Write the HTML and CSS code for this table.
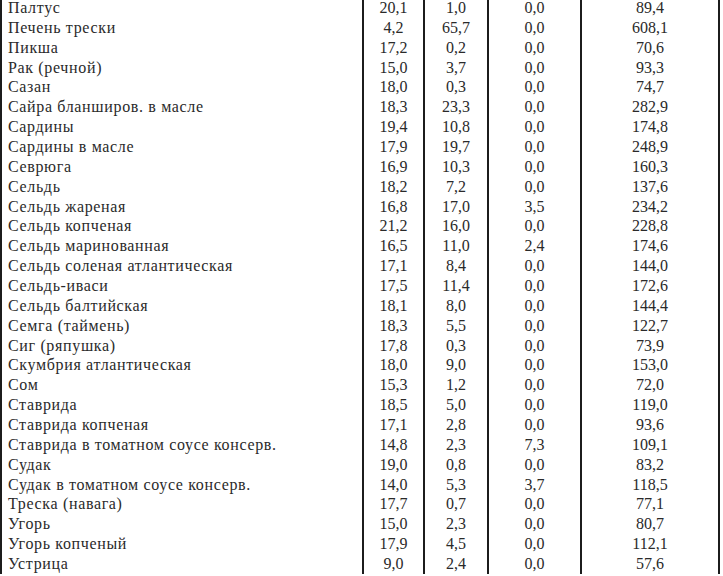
FILE: index.html
```html
<!DOCTYPE html>
<html lang="ru">
<head>
<meta charset="utf-8">
<title>Рыба и морепродукты</title>
<link rel="stylesheet" href="styles.css">
</head>
<body>
<table class="tbl">
<tbody>
<tr><td class="name">Палтус</td><td class="c2">20,1</td><td class="c3">1,0</td><td class="c4">0,0</td><td class="c5">89,4</td></tr>
<tr><td class="name">Печень трески</td><td class="c2">4,2</td><td class="c3">65,7</td><td class="c4">0,0</td><td class="c5">608,1</td></tr>
<tr><td class="name">Пикша</td><td class="c2">17,2</td><td class="c3">0,2</td><td class="c4">0,0</td><td class="c5">70,6</td></tr>
<tr><td class="name">Рак (речной)</td><td class="c2">15,0</td><td class="c3">3,7</td><td class="c4">0,0</td><td class="c5">93,3</td></tr>
<tr><td class="name">Сазан</td><td class="c2">18,0</td><td class="c3">0,3</td><td class="c4">0,0</td><td class="c5">74,7</td></tr>
<tr><td class="name">Сайра бланширов. в масле</td><td class="c2">18,3</td><td class="c3">23,3</td><td class="c4">0,0</td><td class="c5">282,9</td></tr>
<tr><td class="name">Сардины</td><td class="c2">19,4</td><td class="c3">10,8</td><td class="c4">0,0</td><td class="c5">174,8</td></tr>
<tr><td class="name">Сардины в масле</td><td class="c2">17,9</td><td class="c3">19,7</td><td class="c4">0,0</td><td class="c5">248,9</td></tr>
<tr><td class="name">Севрюга</td><td class="c2">16,9</td><td class="c3">10,3</td><td class="c4">0,0</td><td class="c5">160,3</td></tr>
<tr><td class="name">Сельдь</td><td class="c2">18,2</td><td class="c3">7,2</td><td class="c4">0,0</td><td class="c5">137,6</td></tr>
<tr><td class="name">Сельдь жареная</td><td class="c2">16,8</td><td class="c3">17,0</td><td class="c4">3,5</td><td class="c5">234,2</td></tr>
<tr><td class="name">Сельдь копченая</td><td class="c2">21,2</td><td class="c3">16,0</td><td class="c4">0,0</td><td class="c5">228,8</td></tr>
<tr><td class="name">Сельдь маринованная</td><td class="c2">16,5</td><td class="c3">11,0</td><td class="c4">2,4</td><td class="c5">174,6</td></tr>
<tr><td class="name">Сельдь соленая атлантическая</td><td class="c2">17,1</td><td class="c3">8,4</td><td class="c4">0,0</td><td class="c5">144,0</td></tr>
<tr><td class="name">Сельдь-иваси</td><td class="c2">17,5</td><td class="c3">11,4</td><td class="c4">0,0</td><td class="c5">172,6</td></tr>
<tr><td class="name">Сельдь балтийская</td><td class="c2">18,1</td><td class="c3">8,0</td><td class="c4">0,0</td><td class="c5">144,4</td></tr>
<tr><td class="name">Семга (таймень)</td><td class="c2">18,3</td><td class="c3">5,5</td><td class="c4">0,0</td><td class="c5">122,7</td></tr>
<tr><td class="name">Сиг (ряпушка)</td><td class="c2">17,8</td><td class="c3">0,3</td><td class="c4">0,0</td><td class="c5">73,9</td></tr>
<tr><td class="name">Скумбрия атлантическая</td><td class="c2">18,0</td><td class="c3">9,0</td><td class="c4">0,0</td><td class="c5">153,0</td></tr>
<tr><td class="name">Сом</td><td class="c2">15,3</td><td class="c3">1,2</td><td class="c4">0,0</td><td class="c5">72,0</td></tr>
<tr><td class="name">Ставрида</td><td class="c2">18,5</td><td class="c3">5,0</td><td class="c4">0,0</td><td class="c5">119,0</td></tr>
<tr><td class="name">Ставрида копченая</td><td class="c2">17,1</td><td class="c3">2,8</td><td class="c4">0,0</td><td class="c5">93,6</td></tr>
<tr><td class="name">Ставрида в томатном соусе консерв.</td><td class="c2">14,8</td><td class="c3">2,3</td><td class="c4">7,3</td><td class="c5">109,1</td></tr>
<tr><td class="name">Судак</td><td class="c2">19,0</td><td class="c3">0,8</td><td class="c4">0,0</td><td class="c5">83,2</td></tr>
<tr><td class="name">Судак в томатном соусе консерв.</td><td class="c2">14,0</td><td class="c3">5,3</td><td class="c4">3,7</td><td class="c5">118,5</td></tr>
<tr><td class="name">Треска (навага)</td><td class="c2">17,7</td><td class="c3">0,7</td><td class="c4">0,0</td><td class="c5">77,1</td></tr>
<tr><td class="name">Угорь</td><td class="c2">15,0</td><td class="c3">2,3</td><td class="c4">0,0</td><td class="c5">80,7</td></tr>
<tr><td class="name">Угорь копченый</td><td class="c2">17,9</td><td class="c3">4,5</td><td class="c4">0,0</td><td class="c5">112,1</td></tr>
<tr><td class="name">Устрица</td><td class="c2">9,0</td><td class="c3">2,4</td><td class="c4">0,0</td><td class="c5">57,6</td></tr>
</tbody>
</table>
</body>
</html>
```
FILE: styles.css
```css
html, body {
  margin: 0;
  padding: 0;
  background: #ffffff;
  overflow: hidden;
}
.tbl {
  margin-top: -2px;
  border-collapse: separate;
  border-spacing: 0;
  table-layout: fixed;
  width: 720px;
  font-family: "Liberation Serif", "Times New Roman", serif;
  font-size: 16px;
  color: #2a2a2a;
}
.tbl td {
  box-sizing: border-box;
  padding: 0;
  height: 19.86px;
  line-height: 19.86px;
  white-space: nowrap;
  border-right: 2px solid #1c1c1c;
  text-align: center;
}
.tbl td.name {
  width: 364px;
  text-align: left;
  padding-left: 6px;
  letter-spacing: 0.65px;
  border-left: 2px solid #1c1c1c;
}
.tbl td.c2 { width: 61px; }
.tbl td.c3 { width: 64px; }
.tbl td.c4 { width: 93px; }
.tbl td.c5 { width: 138px; }
```
